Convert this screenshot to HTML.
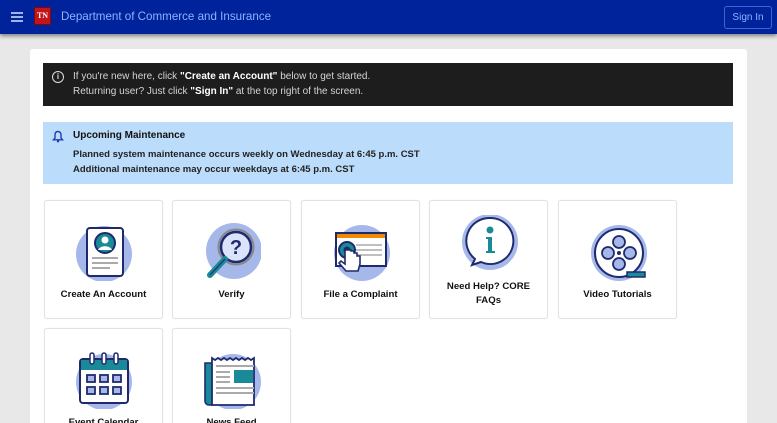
<!DOCTYPE html>
<html><head><meta charset="utf-8"><style>
*{box-sizing:border-box;margin:0;padding:0}
html,body{width:777px;height:423px;overflow:hidden}
body{background:#e8e8e8;font-family:"Liberation Sans",Arial,sans-serif;position:relative}
.hdr{position:absolute;left:0;top:0;width:777px;height:34px;background:#00239c;box-shadow:0 2px 4px rgba(0,0,0,.45);z-index:2}
.ham{position:absolute;left:11px;top:12px;width:12px}
.ham i{display:block;height:2px;background:#9fb4ef;margin-bottom:2px}
.tn{position:absolute;left:34px;top:7px;width:17px;height:18px;background:#c4141b;border:1px solid #7a0a0e;color:#fff;font:bold 8px "Liberation Serif",serif;text-align:center;line-height:16px}
.title{position:absolute;left:61px;top:10px;color:#8fb1ff;font-size:11.6px}
.sign{position:absolute;left:724px;top:6px;width:48px;height:23px;border:1px solid #3f63d0;border-radius:3px;color:#8fb1ff;font-size:10px;text-align:center;line-height:21px}
.card{position:absolute;left:30px;top:49px;width:717px;height:374px;background:#fff;border-radius:3px 3px 0 0}
.info{position:absolute;left:43px;top:63px;width:690px;height:43px;background:#1d1d1d;color:#d4d4d4;font-size:10px;line-height:14.5px;padding:7px 0 0 30px}
.info b{color:#fff}
.ic{position:absolute;left:52px;top:71px;width:12px;height:12px;border:1.3px solid #ddd;border-radius:50%;color:#ddd;font-size:8px;font-weight:bold;text-align:center;line-height:10px}
.mnt{position:absolute;left:43px;top:122px;width:690px;height:62px;background:#bcdcfb;color:#111;font-size:9.5px;padding:8px 0 0 30px}
.mnt .h{font-weight:bold;margin-bottom:7px;font-size:10px}
.mnt p{line-height:14.5px;font-weight:bold;color:#222}
.bell{position:absolute;left:52px;top:130px}
.tile{position:absolute;width:119px;height:119px;border:1.5px solid #e2e2e2;border-radius:3px;background:#fff;text-align:center;font-size:9.6px;font-weight:bold;color:#111;box-shadow:0 0 1px rgba(0,0,0,.1);overflow:hidden}
.tile.r2{height:95px;border-bottom:none;border-radius:3px 3px 0 0}
.tile svg{position:absolute;left:30px;top:22px}
.tile span{position:absolute;left:0;right:0;top:87px;line-height:14px}
</style></head><body>
<div class="hdr">
<div class="ham"><i></i><i></i><i></i></div>
<div class="tn">TN</div>
<div class="title">Department of Commerce and Insurance</div>
<div class="sign">Sign In</div>
</div>
<div class="card"></div>
<div class="info">If you're new here, click <b>"Create an Account"</b> below to get started.<br>Returning user? Just click <b>"Sign In"</b> at the top right of the screen.</div>
<div class="ic">i</div>
<div class="mnt"><div class="h">Upcoming Maintenance</div><p>Planned system maintenance occurs weekly on Wednesday at 6:45 p.m. CST</p><p>Additional maintenance may occur weekdays at 6:45 p.m. CST</p></div>
<svg class="bell" width="12" height="13" viewBox="0 0 12 13"><path d="M6 1.5C3.8 1.5 3 3.2 3 5v3L1.5 9.8h9L9 8V5C9 3.2 8.2 1.5 6 1.5z" fill="none" stroke="#1f3fb0" stroke-width="1.4"/><circle cx="6" cy="11.3" r="1.2" fill="#1f3fb0"/></svg>

<div class="tile" style="left:44px;top:200px">
<svg width="58" height="58" viewBox="0 0 58 58"><circle cx="29" cy="31" r="28" fill="#a6b8ea"/><rect x="12" y="5" width="36" height="48" rx="3" fill="#fff" stroke="#1f2a6e" stroke-width="2"/><circle cx="30" cy="20" r="10" fill="#1a8a99" stroke="#1f2a6e" stroke-width="2"/><circle cx="30" cy="17" r="3.5" fill="#fff"/><path d="M23 27c2-5 12-5 14 0" fill="#fff"/><path d="M17 35h26M17 40h26M17 45h18" stroke="#aaa" stroke-width="2"/></svg>
<span>Create An Account</span></div>

<div class="tile" style="left:172px;top:200px">
<svg width="58" height="58" viewBox="0 0 58 58"><circle cx="31" cy="28" r="28" fill="#a6b8ea"/><circle cx="33" cy="24" r="15" fill="#dbe3fa" stroke="#1f2a6e" stroke-width="2.5"/><circle cx="33" cy="24" r="17.5" fill="none" stroke="#888" stroke-width="2"/><path d="M22 36L7 52" stroke="#1a8a99" stroke-width="6" stroke-linecap="round"/><path d="M22 36L7 52" stroke="#1f2a6e" stroke-width="1" fill="none"/><text x="33" y="31" font-size="20" font-weight="bold" fill="#1f2a6e" text-anchor="middle" font-family="Liberation Sans">?</text></svg>
<span>Verify</span></div>

<div class="tile" style="left:301px;top:200px">
<svg width="58" height="58" viewBox="0 0 58 58"><circle cx="30" cy="30" r="28" fill="#a6b8ea"/><rect x="4" y="10" width="50" height="33" fill="#fff" stroke="#1f2a6e" stroke-width="2"/><rect x="5" y="11" width="48" height="4" fill="#f08a00"/><path d="M24 22h26M24 27h26M24 32h26" stroke="#aaa" stroke-width="1.5"/><circle cx="15" cy="27" r="8" fill="#1a8a99" stroke="#1f2a6e" stroke-width="2"/><circle cx="15" cy="27" r="3.5" fill="#1f2a6e"/><path d="M13 27v14l-4-3-2 2 7 8h12l2-7v-8h-3v-3h-3v-2h-3v-1h-3V27z" fill="#fff" stroke="#1f2a6e" stroke-width="1.6"/></svg>
<span>File a Complaint</span></div>

<div class="tile" style="left:429px;top:200px">
<svg width="58" height="58" viewBox="0 0 58 58" style="top:14px"><circle cx="30" cy="27" r="28" fill="#a6b8ea"/><path d="M30 3a23 23 0 1 1-9 44l-9 3 3-6A23 23 0 0 1 30 3z" fill="#fff" stroke="#1f2a6e" stroke-width="2"/><circle cx="30" cy="15" r="3.5" fill="#1a8a99"/><path d="M26 22h6v14h3v2h-9v-2h2v-12h-2z" fill="#1a8a99"/></svg>
<span style="top:79px">Need Help? CORE<br>FAQs</span></div>

<div class="tile" style="left:558px;top:200px">
<svg width="58" height="58" viewBox="0 0 58 58"><circle cx="30" cy="30" r="28" fill="#a6b8ea"/><circle cx="30" cy="30" r="24" fill="#fff" stroke="#1f2a6e" stroke-width="2"/><g fill="#a6b8ea" stroke="#1f2a6e" stroke-width="1.8"><circle cx="30" cy="19" r="6"/><circle cx="30" cy="41" r="6"/><circle cx="19" cy="30" r="6"/><circle cx="41" cy="30" r="6"/></g><circle cx="30" cy="30" r="2" fill="#1f2a6e"/><rect x="38" y="49" width="18" height="5" fill="#1a8a99" stroke="#1f2a6e" stroke-width="1.5"/></svg>
<span>Video Tutorials</span></div>

<div class="tile r2" style="left:44px;top:328px">
<svg width="58" height="58" viewBox="0 0 58 58"><circle cx="29" cy="31" r="28" fill="#a6b8ea"/><rect x="5" y="8" width="48" height="44" rx="3" fill="#fff" stroke="#1f2a6e" stroke-width="2"/><path d="M6 9h46v10H6z" fill="#1a8a99"/><g fill="#fff" stroke="#1f2a6e" stroke-width="1.5"><rect x="15" y="2" width="4" height="11" rx="2"/><rect x="27" y="2" width="4" height="11" rx="2"/><rect x="39" y="2" width="4" height="11" rx="2"/></g><g fill="#a6b8ea" stroke="#1f2a6e" stroke-width="1.8"><rect x="12" y="24" width="8" height="7"/><rect x="25" y="24" width="8" height="7"/><rect x="38" y="24" width="8" height="7"/><rect x="12" y="36" width="8" height="7"/><rect x="25" y="36" width="8" height="7"/><rect x="38" y="36" width="8" height="7"/></g></svg>
<span>Event Calendar</span></div>

<div class="tile r2" style="left:172px;top:328px">
<svg width="58" height="58" viewBox="0 0 58 58"><circle cx="30" cy="31" r="28" fill="#a6b8ea"/><path d="M2 12h8v42H6a4 4 0 0 1-4-4z" fill="#1a8a99" stroke="#1f2a6e" stroke-width="1.6"/><path d="M9 7l3 2 3-2 3 2 3-2 3 2 3-2 3 2 3-2 3 2 3-2 3 2 3-2 3 2 3-2v47H9z" fill="#fff" stroke="#1f2a6e" stroke-width="1.8"/><path d="M13 15h38M13 21h14M13 26h14M13 31h14M13 37h38M13 42h38" stroke="#aaa" stroke-width="2"/><rect x="31" y="19" width="19" height="13" fill="#1a8a99"/></svg>
<span>News Feed</span></div>
</body></html>
